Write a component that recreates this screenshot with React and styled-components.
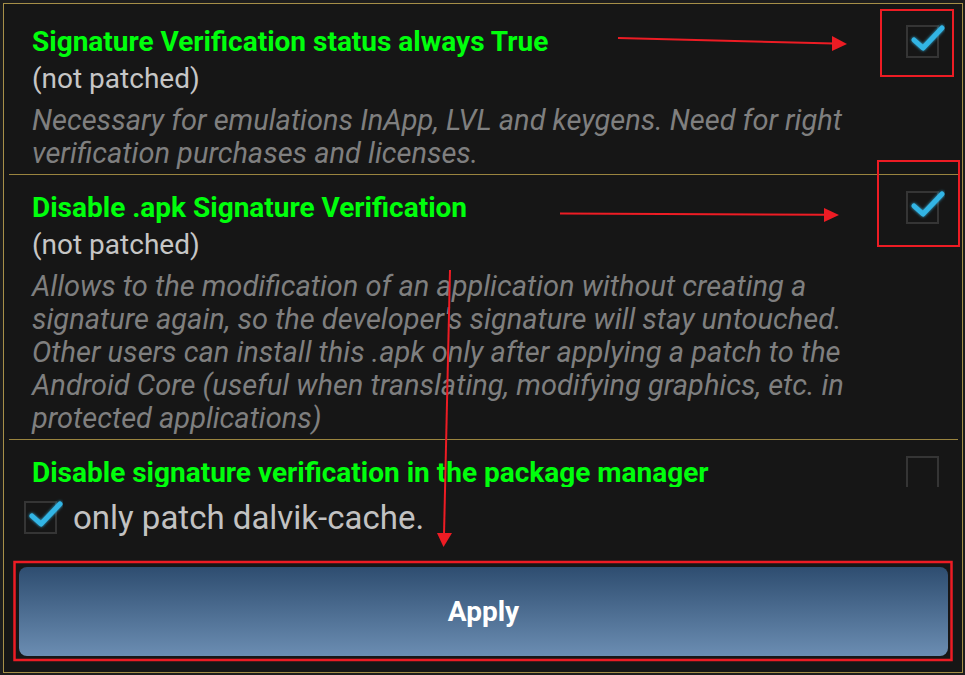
import React from 'react'
import styled, { createGlobalStyle } from 'styled-components'

const Global = createGlobalStyle`
  html, body { margin: 0; padding: 0; }
  body {
    background: #1d1d1d;
    font-family: Roboto, "Noto Sans", sans-serif;
    width: 965px;
    height: 675px;
    overflow: hidden;
  }
`

const Page = styled.div`
  position: relative;
  width: 965px;
  height: 675px;
  padding: 3px 2px 2px 3px;
  box-sizing: border-box;
`

const Dialog = styled.div`
  width: 960px;
  height: 670px;
  box-sizing: border-box;
  border: 1px solid #a68f48;
  background: #161616;
  display: flex;
  flex-direction: column;
`

const ScrollArea = styled.div`
  height: 483px;
  flex: none;
  overflow: hidden;
`

const Item = styled.div`
  display: grid;
  grid-template-columns: 1fr 40px;
  grid-template-areas:
    'title box'
    'sub .'
    'desc .';
  padding: ${p => (p.first ? '20px' : '15px')} 17px 4px 28px;
`

const Divider = styled.div`
  height: 1px;
  margin: 0 4px 0 5px;
  background: #9a843f;
`

const Title = styled.div`
  grid-area: title;
  color: #00ff0c;
  font-weight: 700;
  font-size: 28px;
  line-height: 36px;
  white-space: nowrap;
`

const Status = styled.div`
  grid-area: sub;
  margin-top: 1px;
  color: #c6c6c6;
  font-size: 28px;
  line-height: 36px;
`

const Desc = styled.div`
  grid-area: desc;
  margin-top: 7px;
  color: #7f7f7f;
  font-style: italic;
  font-size: 29px;
  line-height: 33px;
  max-width: 850px;
`

const BoxSlot = styled.div`
  grid-area: box;
  align-self: center;
  height: 40px;
  margin: -2px 0;
`

const CheckRow = styled.div`
  display: flex;
  align-items: center;
  gap: 10px;
  margin-top: 11px;
  padding-left: 19px;
`

const CheckLabel = styled.span`
  color: #c2c2c2;
  font-size: 33px;
  line-height: 40px;
`

const ApplyButton = styled.button`
  margin: 29px 14px 15px 15px;
  height: 89px;
  border: none;
  border-radius: 8px;
  background: linear-gradient(#2e4d70, #6b8db2);
  color: #fff;
  font-family: Roboto, "Noto Sans", sans-serif;
  font-weight: 700;
  font-size: 28px;
  cursor: pointer;
`

const Marks = styled.svg`
  position: absolute;
  left: 0;
  top: 0;
  pointer-events: none;
`

function CheckBox({ checked }) {
  return (
    <svg width="40" height="40" viewBox="0 0 40 40">
      <defs>
        <filter id="glow" x="-30%" y="-30%" width="160%" height="160%">
          <feGaussianBlur stdDeviation="1.6" result="b" />
          <feMerge>
            <feMergeNode in="b" />
            <feMergeNode in="SourceGraphic" />
          </feMerge>
        </filter>
      </defs>
      <rect x="2" y="4" width="31" height="31" fill="none" stroke="#353535" strokeWidth="2" />
      {checked && (
        <path
          d="M9 18 L18 26 L37 6"
          fill="none"
          stroke="#33b5e5"
          strokeWidth="5"
          strokeLinecap="round"
          strokeLinejoin="round"
          filter="url(#glow)"
        />
      )}
    </svg>
  )
}

const items = [
  {
    title: 'Signature Verification status always True',
    desc: 'Necessary for emulations InApp, LVL and keygens. Need for right verification purchases and licenses.',
    checked: true,
  },
  {
    title: 'Disable .apk Signature Verification',
    desc: "Allows to the modification of an application without creating a signature again, so the developer's signature will stay untouched. Other users can install this .apk only after applying a patch to the Android Core (useful when translating, modifying graphics, etc. in protected applications)",
    checked: true,
  },
  {
    title: 'Disable signature verification in the package manager',
    desc: '',
    checked: false,
  },
]

export default function App() {
  return (
    <Page>
      <Global />
      <Dialog>
        <ScrollArea>
          {items.map((it, i) => (
            <React.Fragment key={i}>
              {i > 0 && <Divider />}
              <Item first={i === 0}>
                <Title>{it.title}</Title>
                <BoxSlot>
                  <CheckBox checked={it.checked} />
                </BoxSlot>
                {it.desc && <Status>(not patched)</Status>}
                {it.desc && <Desc>{it.desc}</Desc>}
              </Item>
            </React.Fragment>
          ))}
        </ScrollArea>
        <CheckRow>
          <CheckBox checked />
          <CheckLabel>only patch dalvik-cache.</CheckLabel>
        </CheckRow>
        <ApplyButton>Apply</ApplyButton>
      </Dialog>

      {/* red annotations drawn over the screenshot */}
      <Marks width="965" height="675" viewBox="0 0 965 675">
        <g stroke="#ed1c24" fill="none" strokeWidth="2">
          <rect x="881" y="10" width="72" height="66" />
          <rect x="878" y="161" width="81" height="85" />
          <rect x="14.5" y="562" width="937" height="98" strokeWidth="2.5" />
          <line x1="618" y1="38" x2="834" y2="43.5" />
          <line x1="560" y1="213.5" x2="826" y2="214.8" />
          <line x1="450" y1="270" x2="444" y2="535" />
        </g>
        <g fill="#ed1c24">
          <polygon points="847,44 832,36 832,51" />
          <polygon points="839,215 824,208 824,222" />
          <polygon points="443.5,547 437,533 452,533" />
        </g>
      </Marks>
    </Page>
  )
}
